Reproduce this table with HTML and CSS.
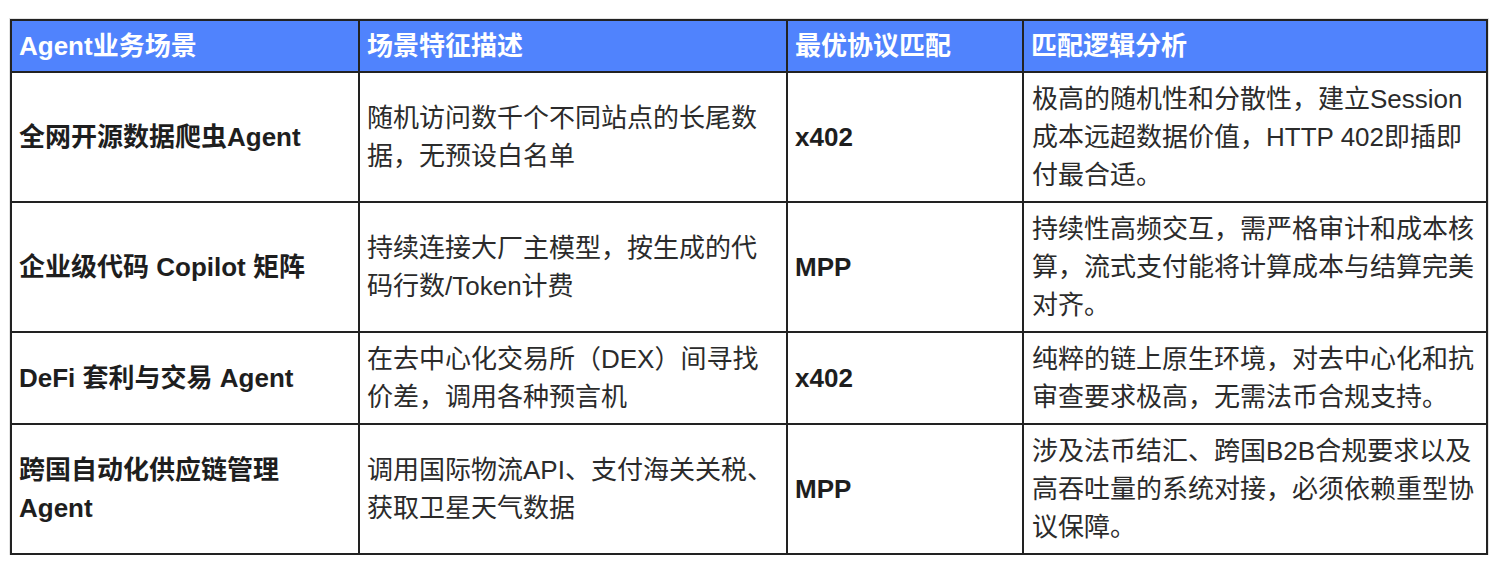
FILE: index.html
```html
<!DOCTYPE html>
<html lang="zh-CN">
<head>
<meta charset="utf-8">
<title>Agent 协议匹配</title>
<link rel="stylesheet" href="styles.css">
</head>
<body>
<div class="page">
  <table class="grid">
    <colgroup>
      <col class="c1"><col class="c2"><col class="c3"><col class="c4">
    </colgroup>
    <thead>
      <tr>
        <th>Agent业务场景</th>
        <th>场景特征描述</th>
        <th>最优协议匹配</th>
        <th>匹配逻辑分析</th>
      </tr>
    </thead>
    <tbody>
      <tr>
        <td class="scene">全网开源数据爬虫Agent</td>
        <td>随机访问数千个不同站点的长尾数据，无预设白名单</td>
        <td class="proto">x402</td>
        <td class="logic">极高的随机性和分散性，建立Session成本远超数据价值，HTTP 402即插即付最合适。</td>
      </tr>
      <tr>
        <td class="scene">企业级代码 Copilot 矩阵</td>
        <td>持续连接大厂主模型，按生成的代码行数/Token计费</td>
        <td class="proto">MPP</td>
        <td class="logic">持续性高频交互，需严格审计和成本核算，流式支付能将计算成本与结算完美对齐。</td>
      </tr>
      <tr>
        <td class="scene">DeFi 套利与交易 Agent</td>
        <td>在去中心化交易所（DEX）间寻找价差，调用各种预言机</td>
        <td class="proto">x402</td>
        <td class="logic">纯粹的链上原生环境，对去中心化和抗审查要求极高，无需法币合规支持。</td>
      </tr>
      <tr>
        <td class="scene">跨国自动化供应链管理 Agent</td>
        <td>调用国际物流API、支付海关关税、获取卫星天气数据</td>
        <td class="proto">MPP</td>
        <td class="logic">涉及法币结汇、跨国B2B合规要求以及高吞吐量的系统对接，必须依赖重型协议保障。</td>
      </tr>
    </tbody>
  </table>
</div>
</body>
</html>
```

FILE: styles.css
```css
html, body {
  margin: 0;
  padding: 0;
  background: #ffffff;
}

.page {
  padding: 19px 0 0 10px;
  font-family: "Liberation Sans", "Noto Sans CJK SC", sans-serif;
  font-size: 26px;
  line-height: 38px;
  color: #2b2b2b;
}

.grid {
  border-collapse: collapse;
  table-layout: fixed;
  width: 1478px;
  box-shadow: 0 0 0 1px #e4e4e4;
}

.c1 { width: 348px; }
.c2 { width: 428px; }
.c3 { width: 236px; }
.c4 { width: 464px; }

.grid th,
.grid td {
  border: 2px solid #222222;
  text-align: left;
  vertical-align: middle;
  padding: 7px 6px 7px 7px;
  word-break: normal;
  line-break: strict;
}

.grid th {
  background: #5083fd;
  color: #ffffff;
  font-weight: 700;
  padding-top: 6px;
  padding-bottom: 6px;
}

.grid td.scene,
.grid td.proto {
  font-weight: 700;
  color: #1e1e1e;
}

.grid td.logic {
  padding-left: 8px;
  padding-right: 6px;
}
```
